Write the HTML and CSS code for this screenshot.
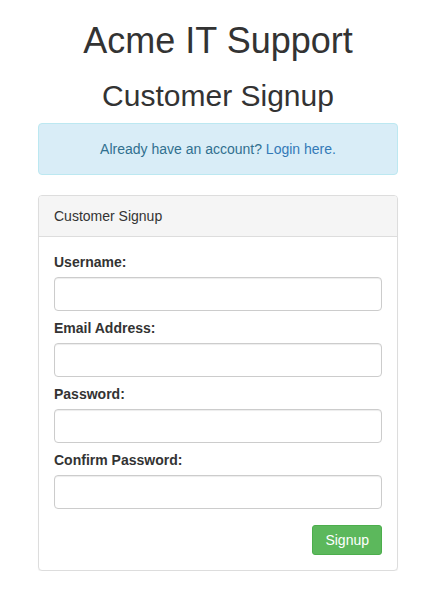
FILE: index.html
```html
<!DOCTYPE html>
<html lang="en">
<head>
    <meta charset="UTF-8">
    <meta name="viewport" content="width=device-width, initial-scale=1.0">
    <title>Acme IT Support - Customer Signup</title>
    <link rel="stylesheet" href="styles.css">
</head>
<body>

    <div class="container">
        <h1>Acme IT Support</h1>
        <h2>Customer Signup</h2>

        <!-- Login hint -->
        <div class="alert-info">
            Already have an account? <a href="#">Login here.</a>
        </div>

        <div class="panel">
            <div class="panel-heading">Customer Signup</div>
            <div class="panel-body">
                <form>
                    <div class="form-group">
                        <label for="username">Username:</label>
                        <input type="text" id="username" class="form-control">
                    </div>
                    <div class="form-group">
                        <label for="email">Email Address:</label>
                        <input type="email" id="email" class="form-control">
                    </div>
                    <div class="form-group">
                        <label for="password">Password:</label>
                        <input type="password" id="password" class="form-control">
                    </div>
                    <div class="form-group">
                        <label for="confirm">Confirm Password:</label>
                        <input type="password" id="confirm" class="form-control">
                    </div>
                    <div class="form-actions">
                        <button type="button" class="btn-success">Signup</button>
                    </div>
                </form>
            </div>
        </div>
    </div>

</body>
</html>
```

FILE: styles.css
```css
/* Base */
body {
    font-family: "Liberation Sans", Arial, sans-serif;
    font-size: 14px;
    line-height: 20px;
    color: #333;
    background-color: #fff;
    margin: 0;
    padding-left: 6px;
}
.container {
    width: 360px;
    margin: 0 auto;
}
h1, h2 {
    font-weight: 400;
    text-align: center;
    line-height: 1.1;
}
h1 {
    font-size: 36px;
    margin: 21px 0 18px;
}
h2 {
    font-size: 30px;
    margin: 0 0 11px;
}

/* Alert */
.alert-info {
    padding: 15px;
    margin-bottom: 20px;
    border: 1px solid #bce8f1;
    border-radius: 4px;
    background-color: #d9edf7;
    color: #31708f;
    text-align: center;
}
.alert-info a {
    color: #337ab7;
    text-decoration: none;
}

/* Panel */
.panel {
    border: 1px solid #ddd;
    border-radius: 4px;
    background-color: #fff;
    box-shadow: 0 1px 1px rgba(0, 0, 0, 0.05);
}
.panel-heading {
    padding: 10px 15px;
    background-color: #f5f5f5;
    border-bottom: 1px solid #ddd;
    border-radius: 3px 3px 0 0;
}
.panel-body {
    padding: 15px;
}

/* Form */
.form-group {
    margin-bottom: 7px;
}
label {
    display: block;
    font-weight: bold;
    margin-bottom: 5px;
}
.form-control {
    display: block;
    box-sizing: border-box;
    width: 100%;
    height: 34px;
    padding: 6px 12px;
    font-family: inherit;
    font-size: 14px;
    color: #555;
    background-color: #fff;
    border: 1px solid #ccc;
    border-radius: 4px;
    box-shadow: inset 0 1px 1px rgba(0, 0, 0, 0.075);
}
.form-actions {
    display: flex;
    justify-content: flex-end;
    padding-top: 9px;
}
.btn-success {
    font-family: inherit;
    font-size: 14px;
    line-height: 20px;
    height: 30px;
    padding: 4px 12px;
    color: #fff;
    background-color: #5cb85c;
    border: 1px solid #4cae4c;
    border-radius: 3px;
    cursor: pointer;
}
```
